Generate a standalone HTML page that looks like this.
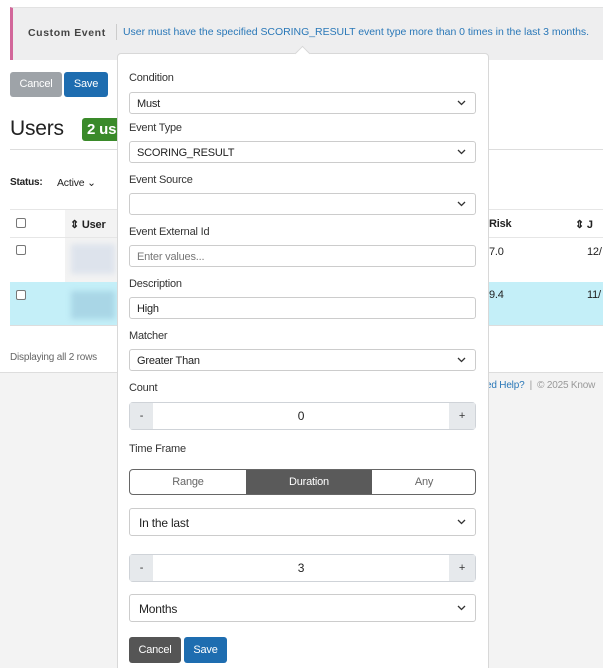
<!DOCTYPE html>
<html><head><style>
*{box-sizing:border-box;margin:0;padding:0}
html,body{width:603px;height:668px;overflow:hidden}
body{background:#fff;font-family:"Liberation Sans",sans-serif;position:relative;color:#222;letter-spacing:-0.2px}
.a{position:absolute;white-space:nowrap}
.banner{left:10px;top:7px;width:593px;height:53px;background:#eeeeef;border-left:3px solid #d2679a;border-top:1px solid #e2e2e2}
.lbl{font-size:11px;color:#333}
.sel{position:absolute;left:129px;width:347px;height:22px;border:1px solid #ccc;border-radius:3px;background:#fff;font-size:11px;padding:5px 7px;color:#222}
.sel svg{position:absolute;right:9px;top:7px}
.step{position:absolute;left:129px;width:347px;height:28px;border:1px solid #cfd3d8;border-radius:4px;background:#fff;font-size:12px}
.step .m,.step .p{position:absolute;top:0;bottom:0;width:23px;background:#e6e9ec;text-align:center;line-height:26px;font-size:11px;color:#333}
.step .m{left:0}.step .p{right:0;width:26px}
.step .v{position:absolute;left:23px;right:26px;text-align:center;line-height:26px}
</style></head><body>
<div class="a banner"></div>
<div class="a" style="left:28px;top:27px;font-size:10.5px;font-weight:bold;color:#444;letter-spacing:0.6px">Custom Event</div>
<div class="a" style="left:116px;top:24px;width:1px;height:16px;background:#ccc"></div>
<div class="a" style="left:123px;top:26px;font-size:10.5px;color:#2a78b8;letter-spacing:-0.03px">User must have the specified SCORING_RESULT event type more than 0 times in the last 3 months.</div>

<div class="a" style="left:10px;top:72px;width:52px;height:25px;background:#9ea3a8;border-radius:3px;color:#fff;font-size:11px;text-align:center;line-height:25px">Cancel</div>
<div class="a" style="left:64px;top:72px;width:44px;height:25px;background:#1e6db0;border-radius:3px;color:#fff;font-size:11px;text-align:center;line-height:25px">Save</div>
<div class="a" style="left:10px;top:117px;font-size:21px;color:#222">Users</div>
<div class="a" style="left:82px;top:118px;width:40px;height:23px;background:#3a8a2a;border-radius:3px;color:#fff;font-size:15px;font-weight:bold;line-height:23px;padding-left:5px">2 us</div>
<div class="a" style="left:10px;top:149px;width:593px;height:1px;background:#ddd"></div>
<div class="a" style="left:10px;top:177px;font-size:10px;font-weight:bold">Status:</div>
<div class="a" style="left:57px;top:177px;font-size:10.5px">Active ⌄</div>
<div class="a" style="left:10px;top:209px;width:593px;height:1px;background:#e6e6e6"></div>
<div class="a" style="left:65px;top:210px;width:52px;height:72px;background:#f3f3f3"></div>
<div class="a" style="left:10px;top:237px;width:593px;height:1px;background:#e6e6e6"></div>
<div class="a" style="left:10px;top:282px;width:593px;height:44px;background:#c4eff8"></div>
<div class="a" style="left:10px;top:325px;width:593px;height:1px;background:#ddd"></div>
<div class="a" style="left:16px;top:218px;width:10px;height:10px;border:1px solid #777;border-radius:2px;background:#fff"></div>
<div class="a" style="left:16px;top:245px;width:10px;height:10px;border:1px solid #777;border-radius:2px;background:#fff"></div>
<div class="a" style="left:16px;top:290px;width:10px;height:10px;border:1px solid #777;border-radius:2px;background:#fff"></div>
<div class="a" style="left:70px;top:218px;font-size:11px;font-weight:bold">⇕ User</div>
<div class="a" style="left:71px;top:244px;width:44px;height:30px;background:#dde3ec;filter:blur(3px)"></div>
<div class="a" style="left:71px;top:291px;width:44px;height:28px;background:#a9d6e6;filter:blur(3px)"></div>
<div class="a" style="left:489px;top:218px;font-size:11px;font-weight:bold">Risk</div>
<div class="a" style="left:575px;top:218px;font-size:11px;font-weight:bold">⇕ J</div>
<div class="a" style="left:489px;top:246px;font-size:11px">7.0</div>
<div class="a" style="left:587px;top:246px;font-size:11px">12/</div>
<div class="a" style="left:489px;top:289px;font-size:11px">9.4</div>
<div class="a" style="left:587px;top:289px;font-size:11px">11/</div>
<div class="a" style="left:10px;top:352px;font-size:10px;color:#666">Displaying all 2 rows</div>
<div class="a" style="left:0;top:372px;width:603px;height:296px;background:#f3f3f3;border-top:1px solid #ddd"></div>
<div class="a" style="left:486px;top:380px;font-size:10px;color:#2a78b8">ed Help? <span style="color:#999">&nbsp;|&nbsp; © 2025 Know</span></div>

<div class="a" style="left:117px;top:53px;width:372px;height:640px;background:#fff;border:1px solid #d8d8d8;border-radius:4px"></div>
<div class="a" style="left:297px;top:48px;width:11px;height:11px;background:#fff;border-left:1px solid #d8d8d8;border-top:1px solid #d8d8d8;transform:rotate(45deg)"></div>

<div class="a lbl" style="left:129px;top:72px">Condition</div>
<div class="sel" style="top:92px">Must<svg width="9" height="6"><path d="M1 1l3.5 3.5L8 1" stroke="#333" fill="none" stroke-width="1.3"/></svg></div>
<div class="a lbl" style="left:129px;top:122px">Event Type</div>
<div class="sel" style="top:141px">SCORING_RESULT<svg width="9" height="6"><path d="M1 1l3.5 3.5L8 1" stroke="#333" fill="none" stroke-width="1.3"/></svg></div>
<div class="a lbl" style="left:129px;top:174px">Event Source</div>
<div class="sel" style="top:193px"><svg width="9" height="6"><path d="M1 1l3.5 3.5L8 1" stroke="#333" fill="none" stroke-width="1.3"/></svg></div>
<div class="a lbl" style="left:129px;top:226px">Event External Id</div>
<div class="sel" style="top:245px;color:#777">Enter values...</div>
<div class="a lbl" style="left:129px;top:278px">Description</div>
<div class="sel" style="top:297px">High</div>
<div class="a lbl" style="left:129px;top:330px">Matcher</div>
<div class="sel" style="top:349px">Greater Than<svg width="9" height="6"><path d="M1 1l3.5 3.5L8 1" stroke="#333" fill="none" stroke-width="1.3"/></svg></div>
<div class="a lbl" style="left:129px;top:382px">Count</div>
<div class="step" style="top:402px"><div class="m">-</div><div class="v">0</div><div class="p">+</div></div>
<div class="a lbl" style="left:129px;top:443px">Time Frame</div>
<div class="a" style="left:129px;top:469px;width:347px;height:26px;border:1px solid #666;border-radius:4px;overflow:hidden;font-size:11px;color:#666">
 <div class="a" style="left:0;top:0;width:116px;height:24px;line-height:24px;text-align:center">Range</div>
 <div class="a" style="left:116px;top:0;width:126px;height:24px;line-height:24px;text-align:center;background:#5a5a5a;color:#fff">Duration</div>
 <div class="a" style="left:242px;top:0;width:104px;height:24px;line-height:24px;text-align:center">Any</div>
</div>
<div class="sel" style="top:508px;height:28px;font-size:12px;padding:7px 9px">In the last<svg width="9" height="6" style="top:10px"><path d="M1 1l3.5 3.5L8 1" stroke="#333" fill="none" stroke-width="1.3"/></svg></div>
<div class="step" style="top:554px"><div class="m">-</div><div class="v">3</div><div class="p">+</div></div>
<div class="sel" style="top:594px;height:28px;font-size:12px;padding:7px 9px">Months<svg width="9" height="6" style="top:10px"><path d="M1 1l3.5 3.5L8 1" stroke="#333" fill="none" stroke-width="1.3"/></svg></div>
<div class="a" style="left:129px;top:637px;width:52px;height:26px;background:#555;border-radius:3px;color:#fff;font-size:11px;text-align:center;line-height:26px">Cancel</div>
<div class="a" style="left:184px;top:637px;width:43px;height:26px;background:#1e6db0;border-radius:3px;color:#fff;font-size:11px;text-align:center;line-height:26px">Save</div>
</body></html>
